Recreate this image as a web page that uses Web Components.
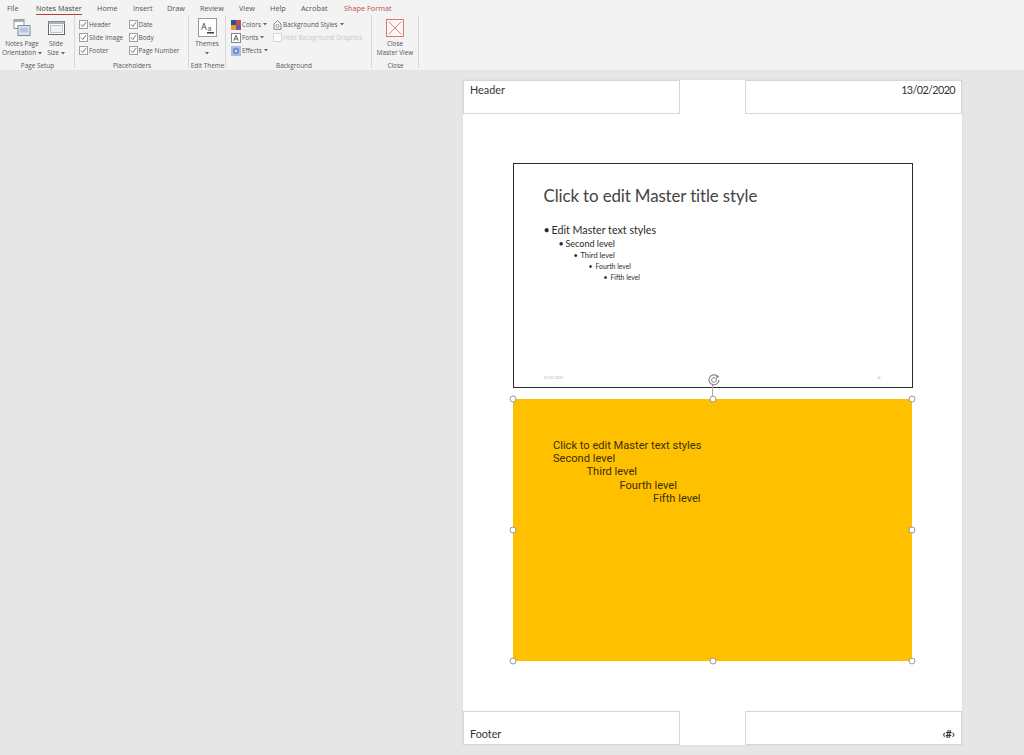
<!DOCTYPE html>
<html lang="en"><head><meta charset="utf-8"><title>Notes Master</title>
<style>
html,body{margin:0;padding:0;height:755px;overflow:hidden;background:#e6e6e6;font-family:"Open Sans","Liberation Sans",sans-serif}
body{display:flex;flex-direction:column}
</style></head><body>
<ppt-ribbon></ppt-ribbon>
<ppt-workspace>
  <notes-page>
    <ph-box slot="header">Header</ph-box>
    <ph-box slot="date" align="right" style="letter-spacing:-.6px">13/02/2020</ph-box>
    <slide-thumb slot="slide"></slide-thumb>
    <notes-body slot="notes"></notes-body>
    <ph-box slot="footer" valign="bottom">Footer</ph-box>
    <ph-box slot="number" valign="bottom" align="right"><b>‹#›</b></ph-box>
  </notes-page>
</ppt-workspace>
<script>
const mk=(name,html)=>{customElements.define(name,class extends HTMLElement{constructor(){super();this.attachShadow({mode:'open'}).innerHTML=typeof html==='function'?html(this):html;}});};
const chev='<svg width="4" height="2.5" viewBox="0 0 4 2.5" style="margin-left:2px;vertical-align:middle;display:inline-block;flex:none"><path d="M0 0H4L2 2.5z" fill="#666"/></svg>';
const check=(on=true)=>`<svg width="9" height="9" viewBox="0 0 9 9" style="flex:none"><rect x=".5" y=".5" width="8" height="8" fill="#fbfbfb" stroke="${on?'#a0a0a0':'#d6d6d6'}"/>${on?'<path d="M2 4.5 3.8 6.5 7 2.2" fill="none" stroke="#777" stroke-width="1"/>':''}</svg>`;
const row=(ic,txt,cls='')=>`<div class="r ${cls}">${ic}<span>${txt}</span></div>`;
const icoColors='<svg width="10" height="10" viewBox="0 0 10 10"><rect width="5" height="5" fill="#2f4f8f"/><rect x="5" width="5" height="5" fill="#c0504d"/><rect y="5" width="5" height="5" fill="#e0a030"/><rect x="5" y="5" width="5" height="5" fill="#7a5a9a"/></svg>';
const icoFonts='<svg width="10" height="10" viewBox="0 0 10 10"><rect x=".5" y=".5" width="9" height="9" fill="#fff" stroke="#888"/><path d="M2.7 7.7 5 2.3 7.3 7.7M3.6 6H6.4" fill="none" stroke="#444" stroke-width=".8"/></svg>';
const icoEffects='<svg width="10" height="10" viewBox="0 0 10 10"><rect width="10" height="10" fill="#a8bfe6"/><circle cx="5" cy="5" r="3.2" fill="#6f90d0"/><circle cx="5" cy="5" r="1.2" fill="#dbe6f7"/></svg>';
const icoBg='<svg width="9" height="10" viewBox="0 0 9 10"><path d="M1 4 4.5.8 8 4v5.3H1z" fill="#fff" stroke="#666" stroke-width=".8"/><circle cx="4.5" cy="6" r="1.6" fill="none" stroke="#666" stroke-width=".7"/></svg>';
mk('ribbon-group',t=>`<style>
:host{display:flex;flex-direction:column;box-sizing:border-box;height:56px;width:var(--w);background:linear-gradient(#d8d8d8,#d8d8d8) right top/1px 53px no-repeat}
.c{flex:1;display:flex;min-height:0}.l{height:10px;line-height:10px;font-size:6.4px;color:#555;text-align:center;flex:none}
</style><div class="c"><slot></slot></div><div class="l" style="padding-right:${t.getAttribute('lpad')||0}px">${t.getAttribute('label')}</div>`);
mk('ribbon-btn',t=>`<style>
:host{display:flex;flex-direction:column;align-items:center;font-size:6.4px;line-height:9px;color:#555;text-align:center;white-space:nowrap;width:var(--bw,auto)}
.i{height:19px;margin:3px 0 2px;display:flex;align-items:center;justify-content:center}
</style><div class="i"><slot name="icon"></slot></div><slot></slot>`);
mk('ppt-ribbon',`<style>
:host{display:block;height:71px;flex:none;background:#f3f3f3;border-bottom:1px solid #e4e4e4;box-sizing:border-box;font-family:"Open Sans","Liberation Sans",sans-serif;box-shadow:0 1px 1px #e0e0e0}
.tabs{display:flex;height:15px;font-size:7.3px;line-height:16px;color:#555}
.tabs span{white-space:nowrap}
.tabs .on{color:#444;border-bottom:1.5px solid #b5403a;height:13.5px}
.tabs .sf{color:#c0504a}
.groups{display:flex}
.col{display:flex;flex-direction:column;padding-top:3px}
.r{display:flex;align-items:center;height:13px;font-size:6.4px;color:#555;white-space:nowrap}
.r svg:first-child{margin-right:1px}.dis{color:#c8c8c8}
.r span{display:flex;align-items:center}
ribbon-btn svg{display:block}
</style>
<div class="tabs">
<span style="margin-left:7px;width:29px">File</span><span class="on" style="width:46px">Notes Master</span>
<span style="margin-left:15px;width:36px">Home</span><span style="width:34px">Insert</span><span style="width:33px">Draw</span><span style="width:39px">Review</span><span style="width:31px">View</span><span style="width:31px">Help</span><span style="width:43px">Acrobat</span><span class="sf">Shape Format</span>
</div>
<div class="groups">
<ribbon-group label="Page Setup" style="--w:75px">
  <ribbon-btn style="--bw:44px"><svg slot="icon" width="18" height="18" viewBox="0 0 18 18"><rect x="1" y=".5" width="10" height="9" fill="#fff" stroke="#8a98a6"/><rect x="1" y=".5" width="10" height="2.5" fill="#a5aeb8"/><rect x="5" y="6.5" width="12" height="10" fill="#dce6f2" stroke="#7a8a9a"/><rect x="7" y="8.5" width="8" height="5" fill="#b2c6dc"/></svg><span>Notes Page</span><span>Orientation<svg width="4" height="2.5" viewBox="0 0 4 2.5" style="margin-left:2px;display:inline-block;vertical-align:middle"><path d="M0 0H4L2 2.5z" fill="#666"/></svg></span></ribbon-btn>
  <ribbon-btn style="--bw:24px"><svg slot="icon" width="17" height="14" viewBox="0 0 17 14"><rect x=".5" y=".5" width="16" height="13" fill="#fff" stroke="#667"/><rect x=".5" y=".5" width="16" height="2.5" fill="#aab2bc"/><rect x="2.5" y="4.5" width="12" height="7" fill="#eef2f7" stroke="#9aa5b0" stroke-width=".6"/></svg><span>Slide</span><span>Size<svg width="4" height="2.5" viewBox="0 0 4 2.5" style="margin-left:2px;display:inline-block;vertical-align:middle"><path d="M0 0H4L2 2.5z" fill="#666"/></svg></span></ribbon-btn>
</ribbon-group>
<ribbon-group label="Placeholders" style="--w:114px">
  <div class="col" style="margin-left:4px;width:49.5px">${row(check(),'Header')}${row(check(),'Slide Image')}${row(check(),'Footer')}</div>
  <div class="col">${row(check(),'Date')}${row(check(),'Body')}${row(check(),'Page Number')}</div>
</ribbon-group>
<ribbon-group label="Edit Theme" style="--w:37px">
  <ribbon-btn style="--bw:36px"><svg slot="icon" width="19" height="19" viewBox="0 0 19 19"><rect x=".5" y=".5" width="18" height="18" fill="#fff" stroke="#999"/><text x="3" y="12" font-family="Open Sans" font-size="9" fill="#444">A</text><text x="9.5" y="13" font-family="Open Sans" font-size="7" fill="#444">a</text><rect x="9" y="14" width="7" height="1.6" fill="#444"/></svg><span>Themes</span><span><svg width="4" height="2.5" viewBox="0 0 4 2.5" style="display:inline-block;vertical-align:middle"><path d="M0 0H4L2 2.5z" fill="#666"/></svg></span></ribbon-btn>
</ribbon-group>
<ribbon-group label="Background" lpad="10" style="--w:146px">
  <div class="col" style="margin-left:5px;width:42px">${row(icoColors,'Colors'+chev)}${row(icoFonts,'Fonts'+chev)}${row(icoEffects,'Effects'+chev)}</div>
  <div class="col">${row(icoBg,'Background Styles'+chev)}${row(check(false),'Hide Background Graphics','dis')}</div>
</ribbon-group>
<ribbon-group label="Close" style="--w:47px">
  <ribbon-btn style="--bw:46px"><svg slot="icon" width="18" height="18" viewBox="0 0 18 18"><rect x=".5" y=".5" width="17" height="17" fill="#fdf6f5" stroke="#d97a72"/><path d="M2.5 2.5 15.5 15.5M15.5 2.5 2.5 15.5" stroke="#d97a72" stroke-width=".9"/></svg><span>Close</span><span>Master View</span></ribbon-btn>
</ribbon-group>
</div>`);
mk('ppt-workspace',`<style>:host{display:flex;flex:1;justify-content:flex-end;padding:9px 62px 0 0;background:#e6e6e6}</style><slot></slot>`);
mk('notes-page',`<style>
:host{display:flex;flex-direction:column;width:499px;height:665px;background:#fff;box-shadow:0 0 2px #d6d6d6;flex:none}
.row{display:flex;justify-content:space-between;height:34px;flex:none}
.mid{margin-left:50px;display:flex;flex-direction:column;width:400px}
</style><div class="row"><slot name="header"></slot><slot name="date"></slot></div>
<div class="mid" style="margin-top:49px"><slot name="slide"></slot></div>
<div class="mid" style="margin-top:11px"><slot name="notes"></slot></div>
<div class="row" style="margin-top:50px"><slot name="footer"></slot><slot name="number"></slot></div>`);
mk('ph-box',t=>`<style>
:host{display:flex;box-sizing:border-box;width:217px;height:34px;border:1px solid #d6d6d6;padding:2px 6px 3px;font:10.8px/14px Lato,"Open Sans",sans-serif;color:#333;
justify-content:${t.getAttribute('align')==='right'?'flex-end':'flex-start'};align-items:${t.getAttribute('valign')==='bottom'?'flex-end':'flex-start'}}
</style><slot></slot>`);
mk('slide-thumb',`<style>
:host{display:block;position:relative;box-sizing:border-box;height:225px;border:1.5px solid #2a2a2a;padding:21px 0 0 29.5px;font-family:Lato,"Open Sans",sans-serif;color:#333}
.t{font-size:16.9px;line-height:22px;font-weight:400;letter-spacing:-.12px;color:#444;margin-bottom:15.5px;white-space:nowrap}
.b{display:flex;white-space:nowrap;color:#2a2a2a}.b i{font-style:normal;width:var(--g);flex:none}
.d{position:absolute;bottom:6px;font-size:3.5px;color:#b5b5b5;line-height:5px}
.rot{position:absolute;left:192.5px;bottom:1.5px}
</style>
<div class="t">Click to edit Master title style</div>
<div class="b" style="font-size:10.7px;line-height:14px;--g:8px"><i>•</i>Edit Master text styles</div>
<div class="b" style="font-size:9px;line-height:13px;margin-left:15px;--g:7px"><i>•</i>Second level</div>
<div class="b" style="font-size:7.5px;line-height:11px;margin-left:30px;--g:7px"><i>•</i>Third level</div>
<div class="b" style="font-size:6.8px;line-height:11px;margin-left:45px;--g:7px"><i>•</i>Fourth level</div>
<div class="b" style="font-size:6.8px;line-height:10px;margin-left:60px;--g:7px"><i>•</i>Fifth level</div>
<span class="d" style="left:29.5px">13/02/2020</span><span class="d" style="right:31px">‹#›</span>
<svg class="rot" width="16" height="12" viewBox="0 0 16 12"><path d="M12 6A5 5 0 1 1 10.2 2" fill="#fff" stroke="#8a8a8a" stroke-width="1.2"/><circle cx="7" cy="6" r="2.4" fill="none" stroke="#8a8a8a"/><path d="M9 .4 12.4 2.6 9.4 4.6z" fill="#8a8a8a"/></svg>`);
mk('notes-body',`<style>
:host{display:block;position:relative;box-sizing:border-box;height:262px;width:399px;background:#ffc000;padding:40px 0 0 40px;font:11.1px/13.2px Roboto,"Liberation Sans",sans-serif;color:#3a2f06}
div{white-space:nowrap}
.h{position:absolute;box-sizing:border-box;width:7px;height:7px;border-radius:50%;background:#fff;border:1.5px solid #999;transform:translate(-50%,-50%)}
.stem{position:absolute;left:199px;top:-14px;width:1px;height:14px;background:#aaa}
</style>
<div>Click to edit Master text styles</div>
<div>Second level</div>
<div style="margin-left:33.5px">Third level</div>
<div style="margin-left:66.5px">Fourth level</div>
<div style="margin-left:100px">Fifth level</div>
<span class="stem"></span>
<span class="h" style="left:0;top:0"></span><span class="h" style="left:50%;top:0"></span><span class="h" style="left:100%;top:0"></span>
<span class="h" style="left:0;top:50%"></span><span class="h" style="left:100%;top:50%"></span>
<span class="h" style="left:0;top:100%"></span><span class="h" style="left:50%;top:100%"></span><span class="h" style="left:100%;top:100%"></span>`);
</script>
</body></html>
